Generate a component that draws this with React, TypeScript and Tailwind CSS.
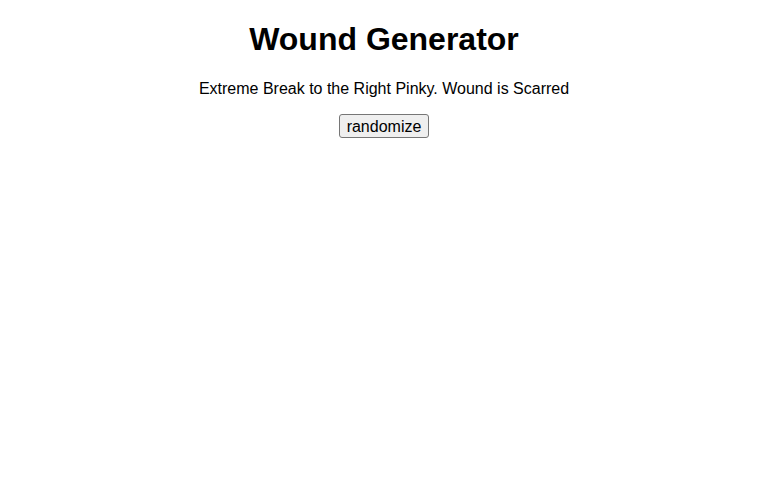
import React, { useState } from 'react';

const severities = ['Minor', 'Moderate', 'Severe', 'Extreme'];
const injuries = ['Cut', 'Bruise', 'Break', 'Burn', 'Sprain'];
const sides = ['Left', 'Right'];
const parts = ['Pinky', 'Thumb', 'Hand', 'Arm', 'Leg', 'Foot', 'Knee'];
const outcomes = ['Scarred', 'Healed', 'Infected', 'Bleeding'];

const pick = (list: string[]) => list[Math.floor(Math.random() * list.length)];

export default function App() {
  const [wound, setWound] = useState('Extreme Break to the Right Pinky. Wound is Scarred');

  const randomize = () => {
    setWound(`${pick(severities)} ${pick(injuries)} to the ${pick(sides)} ${pick(parts)}. Wound is ${pick(outcomes)}`);
  };

  return (
    <div className="min-h-screen bg-white text-black text-center font-['Liberation_Sans',Arial,sans-serif]">
      <h1 className="pt-[21px] text-[32px] leading-[37px] font-bold">Wound Generator</h1>
      <p className="mt-[22px] text-[16px] leading-[18px]">{wound}</p>
      <button
        onClick={randomize}
        className="mt-4 h-[24px] px-[7px] text-[16px] leading-[19px] bg-[#efefef] border border-[#767676] rounded-[3px] hover:bg-[#e5e5e5]"
      >
        randomize
      </button>
    </div>
  );
}
